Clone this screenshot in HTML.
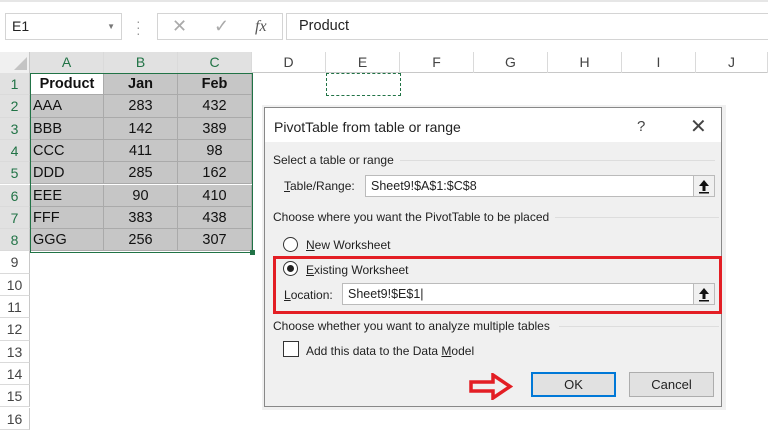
<!DOCTYPE html>
<html><head><meta charset="utf-8"><style>
*{margin:0;padding:0;box-sizing:border-box}
body{width:768px;height:424px;overflow:hidden;background:#fff;font-family:"Liberation Sans",sans-serif;position:relative;color:#222}
.a{position:absolute}
.ch{position:absolute;top:52px;height:21px;text-align:center;font-size:14px;line-height:21px;color:#444;border-right:1px solid #dadada}
.rh{position:absolute;left:0;width:30px;text-align:center;font-size:14px;color:#444;border-bottom:1px solid #dadada;border-right:1px solid #c8c8c8}
.c{position:absolute;height:22.3px;font-size:14.5px;line-height:22px;border-right:1px solid #aaa;border-bottom:1px solid #aaa;background:#c6c6c6;color:#111}
.dl{font-size:12px;color:#222}
.inp{position:absolute;background:#fff;border:1px solid #bbb;font-size:12.5px;line-height:20px;padding-left:5px}
.btn{position:absolute;width:22px;border:1px solid #bbb;background:#f0f0f0}
u{text-decoration:underline}
</style></head><body>
<div class="a" style="left:0;top:0;width:768px;height:2px;background:#e6e6e6"></div>
<div class="a" style="left:5px;top:13px;width:117px;height:27px;border:1px solid #d4d4d4;font-size:14px;line-height:25px;padding-left:6px">E1<span style="position:absolute;right:6px;top:0;font-size:8px;color:#777">▼</span></div>
<div class="a" style="left:136px;top:18px;color:#999;font-size:14px;line-height:6px">·<br>·<br>·</div>
<div class="a" style="left:157px;top:13px;width:126px;height:27px;border:1px solid #d4d4d4;color:#aaa;font-size:18px;line-height:25px"><span style="position:absolute;left:14px">✕</span><span style="position:absolute;left:56px">✓</span><span style="position:absolute;left:97px;color:#555;font-family:'Liberation Serif',serif;font-style:italic;font-size:16px">fx</span></div>
<div class="a" style="left:286px;top:13px;width:490px;height:27px;border:1px solid #d4d4d4;font-size:14.5px;line-height:25px;padding-left:12px">Product</div>
<div class="a" style="left:0;top:52px;width:768px;height:21px;border-bottom:1px solid #c8c8c8"></div>
<div class="a" style="left:0;top:52px;width:30px;height:21px;background:#f0f0f0;border-right:1px solid #c8c8c8"></div>
<div class="a" style="left:14px;top:57px;width:0;height:0;border-left:13px solid transparent;border-bottom:13px solid #c4c4c4"></div>
<div class="ch" style="left:30px;width:74px;background:#e1e1e1;color:#217346">A</div>
<div class="ch" style="left:104px;width:74px;background:#e1e1e1;color:#217346">B</div>
<div class="ch" style="left:178px;width:74px;background:#e1e1e1;color:#217346">C</div>
<div class="ch" style="left:252px;width:74px">D</div>
<div class="ch" style="left:326px;width:74px">E</div>
<div class="ch" style="left:400px;width:74px">F</div>
<div class="ch" style="left:474px;width:74px">G</div>
<div class="ch" style="left:548px;width:74px">H</div>
<div class="ch" style="left:622px;width:74px">I</div>
<div class="ch" style="left:696px;width:72px">J</div>

<div class="rh" style="top:73px;height:22.3px;line-height:22px;background:#e1e1e1;color:#217346">1</div>
<div class="rh" style="top:95.3px;height:22.3px;line-height:22px;background:#e1e1e1;color:#217346">2</div>
<div class="rh" style="top:117.6px;height:22.3px;line-height:22px;background:#e1e1e1;color:#217346">3</div>
<div class="rh" style="top:139.9px;height:22.3px;line-height:22px;background:#e1e1e1;color:#217346">4</div>
<div class="rh" style="top:162.2px;height:22.3px;line-height:22px;background:#e1e1e1;color:#217346">5</div>
<div class="rh" style="top:184.5px;height:22.3px;line-height:22px;background:#e1e1e1;color:#217346">6</div>
<div class="rh" style="top:206.8px;height:22.3px;line-height:22px;background:#e1e1e1;color:#217346">7</div>
<div class="rh" style="top:229.1px;height:22.3px;line-height:22px;background:#e1e1e1;color:#217346">8</div>
<div class="rh" style="top:251.4px;height:22.3px;line-height:22px">9</div>
<div class="rh" style="top:273.7px;height:22.3px;line-height:22px">10</div>
<div class="rh" style="top:296px;height:22.3px;line-height:22px">11</div>
<div class="rh" style="top:318.3px;height:22.3px;line-height:22px">12</div>
<div class="rh" style="top:340.6px;height:22.3px;line-height:22px">13</div>
<div class="rh" style="top:362.9px;height:22.3px;line-height:22px">14</div>
<div class="rh" style="top:385.2px;height:22.3px;line-height:22px">15</div>
<div class="rh" style="top:407.5px;height:22.3px;line-height:22px">16</div>

<div class="c" style="left:31px;top:73px;width:73px;background:#fff;font-weight:bold;text-align:center">Product</div>
<div class="c" style="left:104px;top:73px;width:74px;font-weight:bold;text-align:center">Jan</div>
<div class="c" style="left:178px;top:73px;width:74px;font-weight:bold;text-align:center">Feb</div>
<div class="c" style="left:31px;top:95.3px;width:73px;padding-left:2px">AAA</div><div class="c" style="left:104px;top:95.3px;width:74px;text-align:center">283</div><div class="c" style="left:178px;top:95.3px;width:74px;text-align:center">432</div>
<div class="c" style="left:31px;top:117.6px;width:73px;padding-left:2px">BBB</div><div class="c" style="left:104px;top:117.6px;width:74px;text-align:center">142</div><div class="c" style="left:178px;top:117.6px;width:74px;text-align:center">389</div>
<div class="c" style="left:31px;top:139.9px;width:73px;padding-left:2px">CCC</div><div class="c" style="left:104px;top:139.9px;width:74px;text-align:center">411</div><div class="c" style="left:178px;top:139.9px;width:74px;text-align:center">98</div>
<div class="c" style="left:31px;top:162.2px;width:73px;padding-left:2px">DDD</div><div class="c" style="left:104px;top:162.2px;width:74px;text-align:center">285</div><div class="c" style="left:178px;top:162.2px;width:74px;text-align:center">162</div>
<div class="c" style="left:31px;top:184.5px;width:73px;padding-left:2px">EEE</div><div class="c" style="left:104px;top:184.5px;width:74px;text-align:center">90</div><div class="c" style="left:178px;top:184.5px;width:74px;text-align:center">410</div>
<div class="c" style="left:31px;top:206.8px;width:73px;padding-left:2px">FFF</div><div class="c" style="left:104px;top:206.8px;width:74px;text-align:center">383</div><div class="c" style="left:178px;top:206.8px;width:74px;text-align:center">438</div>
<div class="c" style="left:31px;top:229.1px;width:73px;padding-left:2px">GGG</div><div class="c" style="left:104px;top:229.1px;width:74px;text-align:center">256</div><div class="c" style="left:178px;top:229.1px;width:74px;text-align:center">307</div>
<div class="a" style="left:30px;top:73px;width:223px;height:180px;border:1px solid #217346"></div>
<div class="a" style="left:250px;top:250px;width:5px;height:5px;background:#217346"></div>
<div class="a" style="left:326px;top:73px;width:75px;height:23px;border:1.5px dashed #217346"></div>

<div class="a" style="left:262px;top:105px;width:464px;height:305px;background:rgba(0,0,0,0.06)"></div>
<div class="a" style="left:264px;top:107px;width:458px;height:300px;background:#f0f0f0;border:1px solid #888">
  <div class="a" style="left:0;top:0;width:456px;height:34px;background:#fff"></div>
  <div class="a" style="left:9px;top:11px;font-size:14px">PivotTable from table or range</div>
  <div class="a" style="left:372px;top:10px;font-size:15px;color:#444">?</div>
  <div class="a" style="left:425px;top:6px;font-size:20px;color:#444">✕</div>
  <div class="a dl" style="left:8px;top:45px">Select a table or range</div>
  <div class="a" style="left:135px;top:52px;width:315px;height:1px;background:#ddd"></div>
  <div class="a dl" style="left:19px;top:71px"><u>T</u>able/Range:</div>
  <div class="inp" style="left:100px;top:67px;width:329px;height:22px">Sheet9!$A$1:$C$8</div>
  <div class="btn" style="left:428px;top:67px;height:22px"><svg width="20" height="20" viewBox="0 0 20 20"><path d="M10 4 L5 10 H8.5 V15 H11.5 V10 H15 Z" fill="#111"/><rect x="5" y="16" width="10" height="1.5" fill="#111"/></svg></div>
  <div class="a dl" style="left:8px;top:102px">Choose where you want the PivotTable to be placed</div>
  <div class="a" style="left:290px;top:109px;width:164px;height:1px;background:#ddd"></div>
  <div class="a" style="left:18px;top:129px;width:15px;height:15px;border-radius:50%;border:1px solid #333;background:#fff"></div>
  <div class="a dl" style="left:41px;top:130px"><u>N</u>ew Worksheet</div>
  <div class="a" style="left:8px;top:148px;width:449px;height:58px;border:3px solid #e31e24"></div>
  <div class="a" style="left:18px;top:153px;width:15px;height:15px;border-radius:50%;border:1px solid #333;background:#fff"></div>
  <div class="a" style="left:22px;top:157px;width:7px;height:7px;border-radius:50%;background:#222"></div>
  <div class="a dl" style="left:41px;top:155px"><u>E</u>xisting Worksheet</div>
  <div class="a dl" style="left:19px;top:180px"><u>L</u>ocation:</div>
  <div class="inp" style="left:77px;top:175px;width:353px;height:22px">Sheet9!$E$1|</div>
  <div class="btn" style="left:428px;top:175px;height:22px"><svg width="20" height="20" viewBox="0 0 20 20"><path d="M10 4 L5 10 H8.5 V15 H11.5 V10 H15 Z" fill="#111"/><rect x="5" y="16" width="10" height="1.5" fill="#111"/></svg></div>
  <div class="a dl" style="left:8px;top:211px">Choose whether you want to analyze multiple tables</div>
  <div class="a" style="left:294px;top:218px;width:160px;height:1px;background:#ddd"></div>
  <div class="a" style="left:18px;top:233px;width:16px;height:16px;border:1px solid #333;background:#fff"></div>
  <div class="a dl" style="left:41px;top:236px">Add this data to the Data <u>M</u>odel</div>
  <svg class="a" style="left:204px;top:265px" width="44" height="27" viewBox="0 0 44 27"><path d="M2 9 H24 V2 L41 13.5 L24 25 V18 H2 Z" fill="none" stroke="#e31e24" stroke-width="3.5"/></svg>
  <div class="a" style="left:266px;top:264px;width:85px;height:25px;border:2px solid #0078d7;background:#e1e1e1;text-align:center;font-size:13px;line-height:21px">OK</div>
  <div class="a" style="left:364px;top:264px;width:85px;height:25px;border:1px solid #adadad;background:#e1e1e1;text-align:center;font-size:13px;line-height:23px">Cancel</div>
</div>
</body></html>
